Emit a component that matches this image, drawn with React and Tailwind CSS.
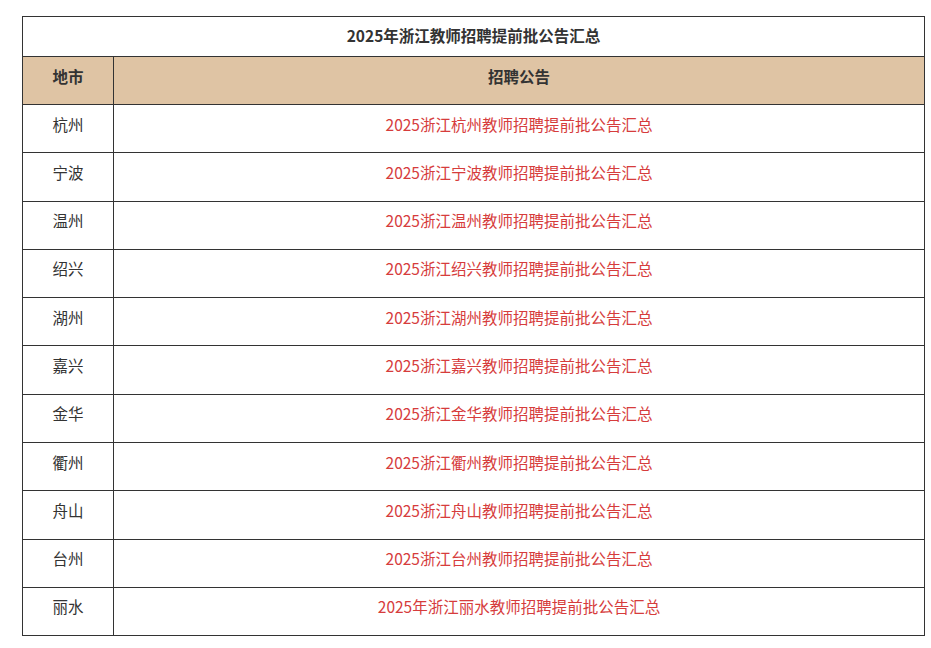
import React from "react";

const cities = ["杭州", "宁波", "温州", "绍兴", "湖州", "嘉兴", "金华", "衢州", "舟山", "台州", "丽水"];

export default function App() {
  return (
    <div
      className="w-[931px] h-[648px] bg-white pt-[16px] pl-[22px]"
      style={{ fontFamily: '"Noto Sans CJK SC", "Noto Sans", sans-serif' }}
    >
      <table className="w-[903px] border-collapse text-[#333333]">
        <tbody>
          <tr className="h-[40px]">
            <td colSpan={2} className="border border-[#333333] pb-[2px] text-center text-[15.5px] font-bold">
              2025年浙江教师招聘提前批公告汇总
            </td>
          </tr>
          <tr className="h-[48px] bg-[#dfc4a4]">
            <td className="w-[91px] border border-[#333333] pb-[7px] text-center text-[15.5px] font-bold">地市</td>
            <td className="border border-[#333333] pb-[7px] text-center text-[15.5px] font-bold">招聘公告</td>
          </tr>
          {cities.map((c) => (
            <tr key={c} className="h-[48.3px]">
              <td className="border border-[#333333] pb-[9px] text-center text-[15.5px]">{c}</td>
              <td className="border border-[#333333] pb-[9px] text-center text-[15.5px] text-[#d63c3c]">
                {c === "丽水" ? "2025年浙江丽水教师招聘提前批公告汇总" : `2025浙江${c}教师招聘提前批公告汇总`}
              </td>
            </tr>
          ))}
        </tbody>
      </table>
    </div>
  );
}
